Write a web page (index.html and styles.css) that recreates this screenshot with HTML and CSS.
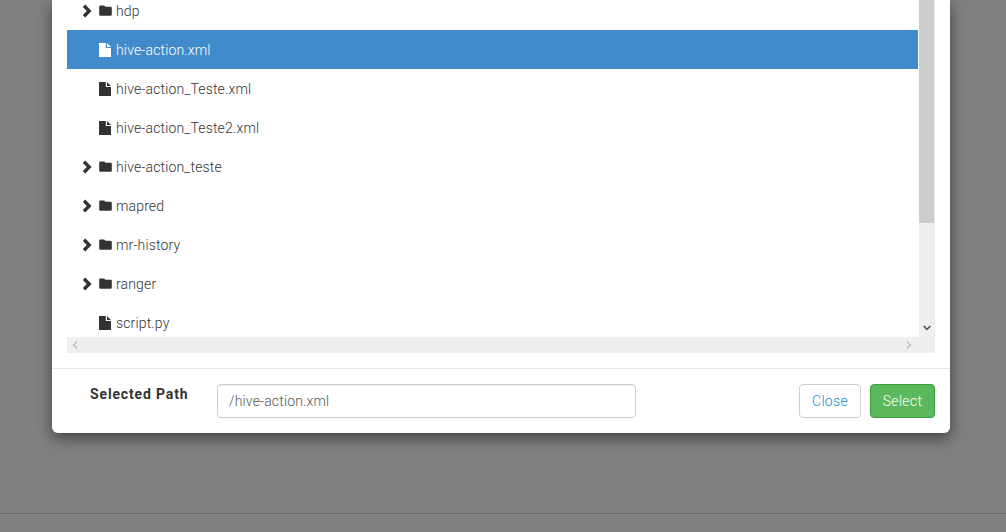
FILE: index.html
```html
<!DOCTYPE html>
<html lang="en">
<head>
<meta charset="utf-8">
<title>Select path</title>
<link rel="stylesheet" href="styles.css">
</head>
<body>
<svg class="defs" width="0" height="0" aria-hidden="true">
  <symbol id="chev" viewBox="0 0 11 14"><path d="M3.2 0.6 L9.6 7 L3.2 13.4 L0.8 11 L4.8 7 L0.8 3 Z"/></symbol>
  <symbol id="folder" viewBox="0 0 13 11"><path d="M1.2 0.4 H4.8 Q5.6 0.4 6 1.2 L6.3 1.8 H11.6 Q12.8 1.8 12.8 3 V9.6 Q12.8 10.8 11.6 10.8 H1.4 Q0.2 10.8 0.2 9.6 V1.4 Q0.2 0.4 1.2 0.4 Z"/></symbol>
  <symbol id="file" viewBox="0 0 12 14"><path d="M0 0 H6.8 V5 H12 V14 H0 Z M8 0 L12 3.9 H8 Z"/></symbol>
</svg>
<main class="modal">
  <div class="browser">
    <div class="pane">
      <ul class="tree">
        <li class="row"><svg class="chev"><use href="#chev"/></svg><svg class="ico folder"><use href="#folder"/></svg><span>hdp</span></li>
        <li class="row active"><span class="chev"></span><svg class="ico file"><use href="#file"/></svg><span>hive-action.xml</span></li>
        <li class="row"><span class="chev"></span><svg class="ico file"><use href="#file"/></svg><span>hive-action_Teste.xml</span></li>
        <li class="row"><span class="chev"></span><svg class="ico file"><use href="#file"/></svg><span>hive-action_Teste2.xml</span></li>
        <li class="row"><svg class="chev"><use href="#chev"/></svg><svg class="ico folder"><use href="#folder"/></svg><span>hive-action_teste</span></li>
        <li class="row"><svg class="chev"><use href="#chev"/></svg><svg class="ico folder"><use href="#folder"/></svg><span>mapred</span></li>
        <li class="row"><svg class="chev"><use href="#chev"/></svg><svg class="ico folder"><use href="#folder"/></svg><span>mr-history</span></li>
        <li class="row"><svg class="chev"><use href="#chev"/></svg><svg class="ico folder"><use href="#folder"/></svg><span>ranger</span></li>
        <li class="row"><span class="chev"></span><svg class="ico file"><use href="#file"/></svg><span>script.py</span></li>
      </ul>
      <div class="vbar">
        <div class="vthumb"></div>
        <svg class="arrow-down" viewBox="0 0 9 6"><path d="M0 1.4 L1.3 0.2 L4.5 3.2 L7.7 0.2 L9 1.4 L4.5 5.8 Z"/></svg>
      </div>
    </div>
    <div class="hbar">
      <svg class="arrow-h" viewBox="0 0 6 9"><path d="M4.6 0 L5.8 1.3 L2.8 4.5 L5.8 7.7 L4.6 9 L0.2 4.5 Z"/></svg>
      <svg class="arrow-h" viewBox="0 0 6 9"><path d="M1.4 0 L5.8 4.5 L1.4 9 L0.2 7.7 L3.2 4.5 L0.2 1.3 Z"/></svg>
    </div>
  </div>
  <footer class="foot">
    <label class="path-label" for="path">Selected Path</label>
    <input class="path-input" id="path" type="text" value="/hive-action.xml">
    <div class="actions">
      <button class="btn btn-close" type="button">Close</button>
      <button class="btn btn-select" type="button">Select</button>
    </div>
  </footer>
</main>
<div class="page-bar"></div>
</body>
</html>
```

FILE: styles.css
```css
* { box-sizing: border-box; }
html, body { margin: 0; height: 532px; overflow: hidden; }
body {
  background: #808080;
  font-family: Roboto, "Liberation Sans", sans-serif;
  font-weight: 300;
  font-size: 14px;
  letter-spacing: .15px;
  color: #333;
  display: flex;
  flex-direction: column;
}
.defs { position: absolute; }
.modal {
  margin: 0 56px 0 52px;
  width: 898px;
  height: 433px;
  flex: none;
  background: #fff;
  border-radius: 0 0 6px 6px;
  box-shadow: 0 5px 15px rgba(0,0,0,.5);
  display: flex;
  flex-direction: column;
}
.browser { height: 368px; padding: 0 15px; flex: none; display: flex; flex-direction: column; }
.pane { height: 337px; display: flex; overflow: hidden; flex: none; }
.tree { list-style: none; margin: -9px 0 0; padding: 0; width: 851px; flex: none; }
.row { height: 39px; display: flex; align-items: center; padding-left: 15px; color: #333; }
.row.active { background: #428bca; color: #fff; }
.chev { width: 11px; height: 14px; fill: #333; margin-right: 6px; flex: none; display: block; }
.ico { fill: currentColor; flex: none; margin-right: 4px; }
.folder { width: 13px; height: 11px; }
.file { width: 12px; height: 14px; margin-right: 5px; }
.vbar { width: 16px; margin-left: 1px; background: #efefef; position: relative; flex: none; }
.vthumb { width: 15px; height: 223px; background: #cdcdcd; }
.arrow-down { position: absolute; left: 4px; top: 325px; width: 8px; height: 6px; fill: #505050; }
.hbar { height: 16px; background: #efefef; display: flex; justify-content: space-between; align-items: center; padding: 0 23px 0 5px; flex: none; }
.arrow-h { width: 6px; height: 8px; fill: #c4c4c4; }
.foot {
  height: 65px;
  border-top: 1px solid #e5e5e5;
  padding: 15px 15px 15px 38px;
  display: flex;
  align-items: flex-start;
}
.path-label { width: 127px; font-weight: 700; font-size: 14px; letter-spacing: .85px; line-height: 20px; color: #333; flex: none; }
.path-input {
  width: 419px; height: 34px; padding: 0 11px;
  border: 1px solid #ccc; border-radius: 4px;
  font: 300 14px Roboto, "Liberation Sans", sans-serif; letter-spacing: .15px; color: #555;
  box-shadow: inset 0 1px 1px rgba(0,0,0,.075);
}
.actions { margin-left: auto; display: flex; gap: 9px; }
.btn { height: 34px; border-radius: 4px; font: 300 14px Roboto, "Liberation Sans", sans-serif; letter-spacing: .3px; padding: 0; }
.btn-close { width: 62px; background: #fff; border: 1px solid #ccc; color: #0f8fc6; }
.btn-select { width: 65px; background: #5cb85c; border: 1px solid #3a9d3a; color: #fff; }
.page-bar { margin-top: 80px; border-top: 1px solid #6b6b6b; flex: 1; }
```
